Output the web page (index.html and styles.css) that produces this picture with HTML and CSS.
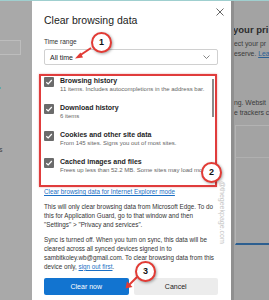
FILE: index.html
```html
<!DOCTYPE html>
<html lang="en">
<head>
  <meta charset="UTF-8" />
  <title>Clear browsing data</title>
  <link rel="stylesheet" href="styles.css">
</head>
<body>
  <div class="screen">
    <div class="topline"></div>
    <div class="main">
      <div class="side-left">
        <div class="ghost-input"></div>
        <div class="ghost-mark"></div>
        <div class="ghost-text">s</div>
      </div>

      <div class="dialog">
        <div class="dialog-head">
          <h1>Clear browsing data</h1>
          <svg class="close" width="8" height="8" viewBox="0 0 8 8"><path d="M0.5 0.5L7.5 7.5M7.5 0.5L0.5 7.5" stroke="#555" stroke-width="0.9"/></svg>
        </div>

        <div class="field-label">Time range</div>
        <div class="select">
          <span>All time</span>
          <svg width="7" height="4" viewBox="0 0 7 4"><path d="M0.5 0.5L3.5 3.5L6.5 0.5" fill="none" stroke="#666" stroke-width="0.8"/></svg>
        </div>

        <div class="options">
          <div class="option">
            <span class="check"><svg width="10" height="10" viewBox="0 0 10 10"><path d="M2.3 5.2L4.2 7L7.8 3" fill="none" stroke="#fff" stroke-width="1.2"/></svg></span>
            <div>
              <div class="opt-title">Browsing history</div>
              <div class="opt-sub">11 items. Includes autocompletions in the address bar.</div>
            </div>
          </div>
          <div class="option">
            <span class="check"><svg width="10" height="10" viewBox="0 0 10 10"><path d="M2.3 5.2L4.2 7L7.8 3" fill="none" stroke="#fff" stroke-width="1.2"/></svg></span>
            <div>
              <div class="opt-title">Download history</div>
              <div class="opt-sub">6 items</div>
            </div>
          </div>
          <div class="option">
            <span class="check"><svg width="10" height="10" viewBox="0 0 10 10"><path d="M2.3 5.2L4.2 7L7.8 3" fill="none" stroke="#fff" stroke-width="1.2"/></svg></span>
            <div>
              <div class="opt-title">Cookies and other site data</div>
              <div class="opt-sub">From 145 sites. Signs you out of most sites.</div>
            </div>
          </div>
          <div class="option">
            <span class="check"><svg width="10" height="10" viewBox="0 0 10 10"><path d="M2.3 5.2L4.2 7L7.8 3" fill="none" stroke="#fff" stroke-width="1.2"/></svg></span>
            <div>
              <div class="opt-title">Cached images and files</div>
              <div class="opt-sub">Frees up less than 52.2 MB. Some sites may load more</div>
            </div>
          </div>
          <div class="scroll-thumb"></div>
        </div>

        <a class="link" href="#">Clear browsing data for Internet Explorer mode</a>

        <p class="note">This will only clear browsing data from Microsoft Edge. To do this for Application Guard, go to that window and then "Settings" &gt; "Privacy and services".</p>
        <p class="note">Sync is turned off. When you turn on sync, this data will be cleared across all synced devices signed in to sambitkoley.wb@gmail.com. To clear browsing data from this device only, <a href="#">sign out first</a>.</p>

        <div class="actions">
          <button class="primary">Clear now</button>
          <button class="secondary">Cancel</button>
        </div>

        <div class="watermark">@thegeekpage.com</div>
      </div>

      <div class="side-right">
        <div class="r-title">your pri</div>
        <div class="r-text">ect your pr</div>
        <div class="r-text">eserve. <span class="r-link">Lea</span></div>
        <div class="r-text r-gap">ng. Websit</div>
        <div class="r-text">e trackers c</div>
        <div class="r-card"></div>
        <div class="r-card r-blue"></div>
      </div>
    </div>

    <!-- annotations -->
    <svg class="arrows" width="269" height="300" viewBox="0 0 269 300">
      <path d="M91 48L79 56" stroke="#e23b35" stroke-width="2" fill="none"/>
      <path d="M75 58.5L80.5 52.5L83 57.5Z" fill="#e23b35"/>
      <path d="M137 277L129 285" stroke="#e23b35" stroke-width="2" fill="none"/>
      <path d="M125.5 288.5L127 281.5L132.5 287Z" fill="#e23b35"/>
    </svg>
    <div class="badge b1">1</div>
    <div class="badge b2">2</div>
    <div class="badge b3">3</div>
  </div>
</body>
</html>
```

FILE: styles.css
```css
* {
  box-sizing: border-box;
}
body {
  margin: 0;
  font-family: "Liberation Sans", Arial, sans-serif;
  background: #a8a8a8;
}
.screen {
  position: relative;
  width: 269px;
  height: 300px;
  overflow: hidden;
}
.topline {
  height: 1px;
  background: #9fcfcf;
}
.main {
  display: flex;
  height: 299px;
}

/* dimmed page on the left */
.side-left {
  width: 32px;
  background: #a9a9a9;
  padding-top: 39px;
}
.ghost-input {
  width: 21px;
  height: 15px;
  border: 1px solid #bdbdbd;
  border-left: none;
  background: #acacac;
}
.ghost-mark {
  width: 1px;
  height: 2px;
  margin-top: 32px;
  background: #5fa8a8;
}
.ghost-text {
  margin-top: 57px;
  font-size: 7px;
  color: #444;
  margin-left: -1px;
}

/* dialog */
.dialog {
  position: relative;
  width: 199px;
  background: #fff;
  padding: 0 13px 0 12px;
}
.dialog-head {
  display: flex;
  justify-content: space-between;
  align-items: flex-start;
}
h1 {
  margin: 13px 0 0;
  font-size: 10.5px;
  line-height: 12px;
  font-weight: normal;
  color: #1b1b1b;
}
.close {
  margin-top: 7px;
  margin-right: -6px;
}
.field-label {
  margin-top: 11px;
  font-size: 6.5px;
  line-height: 9px;
  color: #333;
}
.select {
  margin-top: 3px;
  height: 16px;
  border: 1px solid #d0d0d0;
  border-radius: 2px;
  display: flex;
  align-items: center;
  justify-content: space-between;
  padding: 0 7px 0 5px;
  font-size: 7px;
  color: #222;
}
.options {
  position: relative;
  margin: 9px 0 0 -5px;
  width: 178px;
  height: 113px;
  border: 2px solid #e03c3c;
  box-shadow: 0 0 2px rgba(200, 40, 40, 0.4);
  padding: 0 0 0 3px;
  overflow: hidden;
}
.option {
  display: flex;
  gap: 6px;
  height: 27px;
}
.check {
  width: 10px;
  height: 10px;
  margin-top: 1px;
  background: #6b6b6b;
  border-radius: 1px;
  flex: none;
}
.check svg {
  display: block;
}
.opt-title {
  font-size: 7px;
  line-height: 9px;
  font-weight: bold;
  color: #1e1e1e;
  white-space: nowrap;
}
.opt-sub {
  font-size: 6px;
  line-height: 9px;
  color: #666;
  white-space: nowrap;
}
.scroll-thumb {
  position: absolute;
  right: 1px;
  top: 3px;
  width: 2px;
  height: 38px;
  background: #8a8a8a;
}
.link {
  display: block;
  font-size: 6.3px;
  line-height: 9px;
  color: #1a6fc4;
}
.note {
  margin: 7px 0 0;
  font-size: 6.3px;
  line-height: 8.8px;
  color: #333;
}
.note a {
  color: #1a6fc4;
}
.actions {
  display: flex;
  gap: 5px;
  margin-top: 6px;
}
.actions button {
  flex: 1;
  height: 17px;
  border: none;
  border-radius: 2px;
  font-family: inherit;
  font-size: 7px;
  padding: 0;
}
.primary {
  background: #1274d0;
  color: #fff;
}
.secondary {
  background: #ececec;
  color: #222;
}
.watermark {
  position: absolute;
  left: 187px;
  top: 180px;
  writing-mode: vertical-rl;
  font-size: 7px;
  color: #c4c4c4;
}

/* dimmed settings page on the right */
.side-right {
  flex: 1;
  background: #a3a3a3;
  border-left: 3px solid #8f8f8f;
  padding-top: 23px;
  overflow: hidden;
  white-space: nowrap;
  color: #2c2c2c;
}
.r-title {
  font-size: 9.5px;
  line-height: 11px;
  font-weight: bold;
  margin-left: -1px;
  margin-bottom: 4px;
}
.r-text {
  font-size: 6.8px;
  line-height: 9.5px;
  color: #3a3a3a;
}
.r-gap {
  margin-top: 40px;
}
.r-link {
  color: #2a5f95;
  text-decoration: underline;
}
.r-card {
  margin-top: 8px;
  height: 32px;
  border-top: 1px solid #b3b3b3;
  border-left: 1px solid #b3b3b3;
  margin-left: 1px;
}
.r-card.r-blue {
  margin-top: 0;
  height: 88px;
  border-bottom: 2px solid #2d5f90;
  border-top: 1px solid #b0b0b0;
}

/* annotations */
.arrows {
  position: absolute;
  left: 0;
  top: 0;
}
.badge {
  position: absolute;
  width: 21px;
  height: 21px;
  border: 2px solid #e23b35;
  border-radius: 50%;
  background: #fff;
  box-shadow: 1px 1px 3px rgba(0, 0, 0, 0.35);
  font-size: 9px;
  font-weight: bold;
  line-height: 17px;
  text-align: center;
  color: #111;
}
.b1 {
  left: 91px;
  top: 32px;
}
.b2 {
  left: 201px;
  top: 162px;
}
.b3 {
  left: 135px;
  top: 261px;
}
```
